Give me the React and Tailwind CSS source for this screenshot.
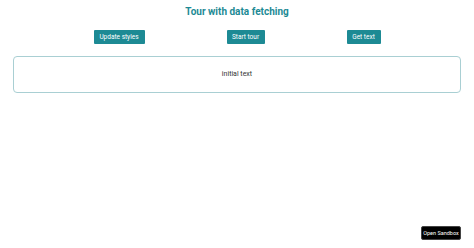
export default function App() {
  return (
    <div
      className="relative h-[248px] w-full bg-white"
      style={{ fontFamily: "Roboto, 'Liberation Sans', sans-serif" }}
    >
      <h1 className="pt-[5px] text-center text-[10px] font-bold leading-[14px] text-[#1d8a94]">
        Tour with data fetching
      </h1>
      <div className="mt-[11px] flex justify-center gap-[82px]">
        <button className="h-[14px] w-[51px] rounded-[1px] bg-[#1d8a94] text-[6.5px] leading-[14px] text-white">
          Update styles
        </button>
        <button className="h-[14px] w-[38px] rounded-[1px] bg-[#1d8a94] text-[6.5px] leading-[14px] text-white">
          Start tour
        </button>
        <button className="h-[14px] w-[34px] rounded-[1px] bg-[#1d8a94] text-[6.5px] leading-[14px] text-white">
          Get text
        </button>
      </div>
      <div className="mx-[13px] mt-[12px] flex h-[37px] items-center justify-center rounded-[4px] border border-[#a9cfd3]">
        <p className="text-[7px] text-[#333]">initial text</p>
      </div>
      <div className="absolute bottom-[8px] right-[13px] flex h-[14px] w-[40px] items-center justify-center rounded-[2px] border border-[#444] bg-black text-[5.5px] text-white">
        Open Sandbox
      </div>
    </div>
  );
}
